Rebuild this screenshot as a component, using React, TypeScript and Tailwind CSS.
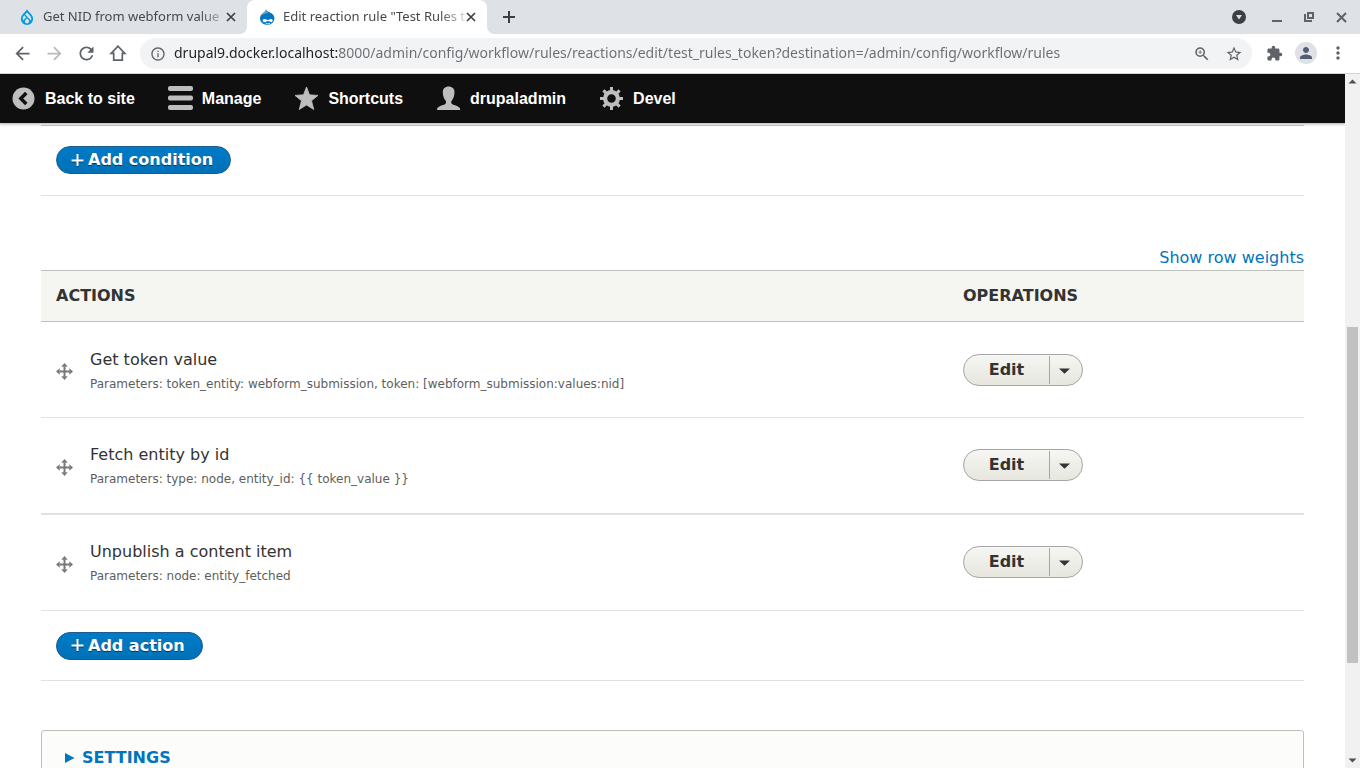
import type { ReactNode } from "react";
import { SiDrupal } from "react-icons/si";
import {
  MdArrowBack,
  MdArrowForward,
  MdExtension,
  MdInfoOutline,
  MdMoreVert,
  MdPerson,
  MdRefresh,
  MdStarBorder,
  MdZoomIn,
} from "react-icons/md";

const actions = [
  {
    id: 1,
    name: "Get token value",
    parameters:
      "Parameters: token_entity: webform_submission, token: [webform_submission:values:nid]",
    rowClass: "h-24 border-b",
  },
  {
    id: 2,
    name: "Fetch entity by id",
    parameters: "Parameters: type: node, entity_id: {{ token_value }}",
    rowClass: "h-24 border-b-2",
  },
  {
    id: 3,
    name: "Unpublish a content item",
    parameters: "Parameters: node: entity_fetched",
    rowClass: "h-[97px] border-b",
  },
];

const DrupliconIcon = () => (
  <svg viewBox="0 0 16 16" className="size-4 shrink-0">
    <path
      d="M7 .3c.5 1.500 1.600 2.100 3 2.700 2.600 1 5.400 2.800 5.400 6.400 0 3.600-3.300 6.400-7.200 6.400S1 13.200 1 9.300c0-2.700 1.700-4.300 3.200-5.400C6 2.700 6.900 1.900 7 .3z"
      fill="#0077c0"
    />
    <path
      d="M1.600 7c.6-1.400 1.600-2.400 2.800-3.200C5.800 2.800 6.900 2 7 .3c.5 1.500 1.400 2 2.600 2.600C8.400 4.600 4.400 4.500 1.600 7z"
      fill="#6b9cb8"
    />
    <path
      d="M5.800 10c1.400 0 2.300 1.100 3.300 1.100s1.900-1 3-1c1 0 1.600.6 1.600 1.400 0 .9-.6 1.500-1.500 1.500-1.200 0-2-.9-3.100-.9-1.200 0-1.900 1.100-3.600 1.100-1.200 0-1.900-.7-1.900-1.600s.9-1.600 2.200-1.600z"
      fill="#fff"
    />
    <path
      d="M6.500 14.200c1.500.8 3.200.8 4.600 0"
      stroke="#fff"
      strokeWidth=".8"
      fill="none"
    />
  </svg>
);

const Tab = ({
  icon,
  title,
  active,
}: {
  icon: ReactNode;
  title: string;
  active?: boolean;
}) => (
  <div
    className={
      active
        ? "relative flex w-60 items-center rounded-t-lg bg-white pr-2.5 pl-3"
        : "relative flex w-60 items-center pr-2.5 pl-3"
    }
  >
    {active && (
      <>
        <span className="absolute bottom-0 -left-2 size-2 bg-[radial-gradient(circle_at_0_0,transparent_8px,#fff_8px)]" />
        <span className="absolute -right-2 bottom-0 size-2 bg-[radial-gradient(circle_at_100%_0,transparent_8px,#fff_8px)]" />
      </>
    )}
    {icon}
    <button className="ml-2 flex-1 text-left text-[13px] whitespace-nowrap text-[#45494d] [mask-image:linear-gradient(90deg,#000_86%,rgba(0,0,0,0.2))]">
      {title}
    </button>
    <button aria-label="Close tab">
      <svg viewBox="2 2 12 12" className="size-3">
        <path d="M4 4l8 8M12 4l-8 8" stroke="#3c4043" strokeWidth="1.700" />
      </svg>
    </button>
  </div>
);

const BrowserButton = ({
  label,
  children,
}: {
  label: string;
  children: ReactNode;
}) => (
  <button
    aria-label={label}
    className="flex w-8 shrink-0 items-center justify-center text-[#5f6368]"
  >
    {children}
  </button>
);

const BrowserChrome = () => (
  <div className="shrink-0 font-['Noto_Sans',sans-serif]">
    <div className="flex h-[34px] bg-[#dee1e6] pl-[7px]">
      <Tab
        icon={<SiDrupal className="size-4 shrink-0 text-[#009cde]" />}
        title="Get NID from webform value"
      />
      <Tab
        active
        icon={<DrupliconIcon />}
        title={'Edit reaction rule "Test Rules t'}
      />
      <button aria-label="New tab" className="ml-3.5 self-center">
        <svg viewBox="0 0 16 16" className="size-4">
          <path d="M8 2v12M2 8h12" stroke="#3c4043" strokeWidth="2" />
        </svg>
      </button>
      <div className="ml-auto flex items-center gap-4 pr-[11px]">
        <button aria-label="Search tabs" className="mr-1.5">
          <svg viewBox="0 0 16 16" className="size-4">
            <circle cx="8" cy="8" r="7" fill="#3c4043" />
            <path d="M5 6h6l-3 4.500z" fill="#dee1e6" />
          </svg>
        </button>
        <button aria-label="Minimize">
          <svg viewBox="0 0 16 16" className="size-4">
            <path d="M3 12h10" stroke="#5f6368" strokeWidth="2" />
          </svg>
        </button>
        <button aria-label="Restore">
          <svg
            viewBox="0 0 16 16"
            className="size-4"
            fill="none"
            stroke="#5f6368"
            strokeWidth="2"
          >
            <path d="M7 4h5v5h-5z" />
            <path d="M4 5v7h7" />
          </svg>
        </button>
        <button aria-label="Close">
          <svg viewBox="0 0 16 16" className="size-4">
            <path d="M4 4l9 9M13 4l-9 9" stroke="#5f6368" strokeWidth="2" />
          </svg>
        </button>
      </div>
    </div>

    <div className="flex h-10 items-stretch gap-1.5 border-b border-[#d4d4d4] bg-white px-1.5 pb-px">
      <div className="flex">
        <BrowserButton label="Back">
          <MdArrowBack className="size-[21px]" />
        </BrowserButton>
        <BrowserButton label="Forward">
          <MdArrowForward className="size-[21px] text-[#bababa]" />
        </BrowserButton>
        <BrowserButton label="Reload">
          <MdRefresh className="size-[21px]" />
        </BrowserButton>
        <BrowserButton label="Home">
          <svg
            viewBox="0 0 18 18"
            className="size-[18px]"
            fill="none"
            stroke="currentColor"
            strokeWidth="1.700"
          >
            <path d="M9 2.200L2.200 9.300h2.500v6.900h8.600V9.300h2.500z" />
          </svg>
        </BrowserButton>
      </div>
      <div className="mt-1 flex h-[31px] flex-1 items-stretch rounded-full bg-[#f1f3f4] pr-0.5 pl-2.5">
        <MdInfoOutline className="size-4 shrink-0 self-center text-[#5f6368]" />
        <input
          aria-label="Address"
          defaultValue="drupal9.docker.localhost:8000/admin/config/workflow/rules/reactions/edit/test_rules_token?destination=/admin/config/workflow/rules"
          className="ml-2 min-w-0 flex-1 bg-[linear-gradient(90deg,#202124_164px,#6a6e73_164px)] bg-clip-text pb-0.5 text-sm text-transparent outline-none"
        />
        <BrowserButton label="Zoom">
          <MdZoomIn className="size-[18px]" />
        </BrowserButton>
        <BrowserButton label="Bookmark">
          <MdStarBorder className="size-[18px]" />
        </BrowserButton>
      </div>
      <div className="flex">
        <BrowserButton label="Extensions">
          <MdExtension className="size-[17px]" />
        </BrowserButton>
        <BrowserButton label="Profile">
          <span className="flex size-[22px] items-center justify-center rounded-full bg-[#dee1e6]">
            <MdPerson className="size-[18px] text-[#535d75]" />
          </span>
        </BrowserButton>
        <BrowserButton label="Menu">
          <MdMoreVert className="size-5" />
        </BrowserButton>
      </div>
    </div>
  </div>
);

const toolbarItems = [
  {
    name: "Back to site",
    icon: (
      <>
        <circle cx="12.500" cy="12.500" r="11" />
        <path
          d="M15.300 7l-5.500 5.500 5.500 5.500"
          fill="none"
          stroke="#0f0f0f"
          strokeWidth="3.400"
        />
      </>
    ),
  },
  {
    name: "Manage",
    icon: (
      <>
        <rect y="0" width="25" height="5" rx="2" />
        <rect y="9.500" width="25" height="5" rx="2" />
        <rect y="19" width="25" height="5" rx="2" />
      </>
    ),
  },
  {
    name: "Shortcuts",
    icon: (
      <path
        d="M12.500 1l3 7.800 8.500.6-6.500 5.400 2.300 8.700-7.300-4.500-7.300 4.500 2.300-8.700L1 9.400l8.500-.6z"
        stroke="#bebebe"
        strokeWidth=".8"
        strokeLinejoin="round"
      />
    ),
  },
  {
    name: "drupaladmin",
    icon: (
      <path d="M12.500.5c-3.500 0-5.700 2.200-5.700 5.700 0 3.500 1.200 6.500 2.700 8.300.9 1.200.8 3-.6 3.800-1.900 1.100-7.900 1.700-7.900 5.700h23.300c0-4-6-4.600-7.900-5.700-1.400-.8-1.500-2.600-.6-3.800 1.500-1.800 2.700-4.800 2.700-8.300 0-3.500-2.300-5.700-6-5.700z" />
    ),
  },
  {
    name: "Devel",
    icon: (
      <>
        <circle
          cx="12.500"
          cy="12.500"
          r="6.400"
          fill="none"
          stroke="#bebebe"
          strokeWidth="4.200"
        />
        <path
          d="M12.500 1v5M12.500 19v5M1 12.500h5M19 12.500h5M4.400 4.400l3.500 3.500M17.100 17.100l3.500 3.500M20.600 4.400l-3.500 3.500M7.900 17.100l-3.500 3.500"
          stroke="#bebebe"
          strokeWidth="3"
        />
      </>
    ),
  },
];

const AdminToolbar = () => (
  <nav className="relative flex h-[49px] items-center gap-[33px] bg-[#0f0f0f] pl-[11px] font-['Liberation_Sans',sans-serif] shadow-[0_0_3px_1px_rgba(0,0,0,0.333)]">
    {toolbarItems.map((item) => (
      <a
        key={item.name}
        href="#"
        className="flex items-center gap-[9px] text-base font-bold text-white"
      >
        <svg viewBox="0 0 25 25" className="size-[25px]" fill="#bebebe">
          {item.icon}
        </svg>
        {item.name}
      </a>
    ))}
  </nav>
);

const AddButton = ({ label }: { label: string }) => (
  <button className="flex h-7 items-center gap-1 rounded-full border border-[#1e5c90] bg-linear-to-b from-[#007bc6] to-[#0071b8] pr-[17px] pl-3.5 font-bold text-white [text-shadow:0_1px_0_rgba(0,0,0,0.5)]">
    <svg viewBox="0 0 13 13" className="size-[13px]">
      <path d="M6.500 1v12M.5 7.500h12" stroke="#00406b" strokeWidth="2" />
      <path d="M6.500 0v12M.5 6.500h12" stroke="#fff" strokeWidth="2" />
    </svg>
    {label}
  </button>
);

const DragHandle = () => (
  <button aria-label="Drag to re-order" className="mt-1">
    <svg viewBox="0 0 17 17" className="size-[17px]" fill="#787878">
      <path d="M7.500 3.500h2v10h-2zM3.500 7.500h10v2h-10z" />
      <path d="M8.500 0l3.200 3.700H5.300zM8.500 17l3.200-3.700H5.300zM0 8.500l3.700-3.200v6.400zM17 8.500l-3.700-3.200v6.400z" />
    </svg>
  </button>
);

const DropButton = () => (
  <div className="flex h-8 w-[120px] overflow-hidden rounded-full border border-[#a6a6a6] bg-linear-to-b from-[#f6f6f3] to-[#e7e7df] py-px">
    <button className="flex-1 border-r border-[#a6a6a6] font-bold text-[#333]">
      Edit
    </button>
    <button
      aria-label="List additional actions"
      className="flex w-8 items-center justify-center"
    >
      <svg viewBox="0 0 11 6" className="mt-0.5 mr-1 h-1.5 w-[11px]">
        <path d="M0 .5h11L5.500 5.800z" fill="#333" />
      </svg>
    </button>
  </div>
);

const ActionsTable = () => (
  <table className="w-full table-fixed border-collapse text-left">
    <thead>
      <tr className="h-[51px] border-y border-[#bfbfba] bg-[#f5f5f2] uppercase">
        <th className="px-[15px]">Actions</th>
        <th className="w-[356px] px-[15px]">Operations</th>
      </tr>
    </thead>
    <tbody>
      {actions.map((action) => (
        <tr key={action.id} className={`border-[#e1e1dd] ${action.rowClass}`}>
          <td className="px-[15px]">
            <div className="flex items-center gap-[17px]">
              <DragHandle />
              <div className="pt-1">
                <div className="leading-6">{action.name}</div>
                <div className="text-xs leading-6 text-[#5e5e5c]">
                  {action.parameters}
                </div>
              </div>
            </div>
          </td>
          <td className="px-[15px]">
            <DropButton />
          </td>
        </tr>
      ))}
      <tr className="h-[70px] border-b border-[#e1e1dd]">
        <td colSpan={2} className="px-[15px]">
          <AddButton label="Add action" />
        </td>
      </tr>
    </tbody>
  </table>
);

const Scrollbar = () => (
  <div className="flex w-[15px] shrink-0 flex-col bg-[#f1f1f1]">
    <svg viewBox="0 0 15 15" className="size-[15px]">
      <path d="M7.500 5.500l4 4h-8z" fill="#505050" />
    </svg>
    <div className="grow-[238]" />
    <div className="mx-0.5 grow-[336] bg-[#c1c1c1]" />
    <div className="grow-[90]" />
    <svg viewBox="0 0 15 15" className="size-[15px]">
      <path d="M3.500 5.500h8l-4 4z" fill="#505050" />
    </svg>
  </div>
);

const App = () => {
  return (
    <div className="flex h-screen flex-col overflow-hidden bg-white">
      <BrowserChrome />
      <div className="flex min-h-0 flex-1">
        <div className="min-w-0 flex-1 overflow-hidden">
          <AdminToolbar />
          <main className="px-[41px] pt-0.5 font-['DejaVu_Sans',sans-serif] text-base text-[#333]">
            <div className="flex h-[71px] items-start border-t border-b border-t-[#c8c8c5] border-b-[#e1e1dd] px-[15px] pt-5">
              <AddButton label="Add condition" />
            </div>
            <div className="mt-[50px] flex justify-end">
              <a href="#" className="leading-6 text-[#0074bd]">
                Show row weights
              </a>
            </div>
            <ActionsTable />
            <details className="mt-[49px] rounded-t-[3px] border border-[#bfbfba] bg-[#fcfcfa]">
              <summary className="flex cursor-pointer list-none items-center gap-[7px] px-[23px] py-[15px] font-bold text-[#0074bd] uppercase">
                <svg viewBox="0 0 10 11" className="h-[11px] w-2.5">
                  <path d="M0 0v10l9.500-5z" fill="#0074bd" />
                </svg>
                Settings
              </summary>
            </details>
          </main>
        </div>
        <Scrollbar />
      </div>
    </div>
  );
};

export default App;
